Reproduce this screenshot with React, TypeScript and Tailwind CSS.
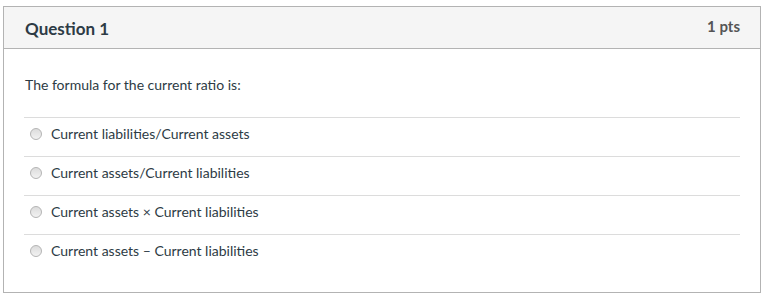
const options = [
  "Current liabilities/Current assets",
  "Current assets/Current liabilities",
  "Current assets × Current liabilities",
  "Current assets – Current liabilities",
];

function Radio() {
  return (
    <span className="block w-[12px] h-[12px] rounded-full border border-[#b4b4b4] bg-gradient-to-b from-[#dcdcdc] to-[#f2f2f2] shrink-0" />
  );
}

export default function App() {
  return (
    <div className="pl-[3px] pt-[6px] bg-white font-['Lato','Liberation_Sans',sans-serif] text-[#2d3b45]">
      <div className="w-[758px] border border-[#b3b3b3] bg-white">
        <div className="h-[42px] flex items-center justify-between pl-[21px] pr-[20px] bg-[#f5f5f5] border-b border-[#b3b3b3]">
          <h2 className="text-[17px] font-bold leading-none mt-[1px]">Question 1</h2>
          <span className="text-[15px] font-bold text-[#555] leading-none -mt-[3px]">1 pts</span>
        </div>
        <div className="pl-[20px] pr-[20px] pt-[26px] pb-[19px]">
          <p className="text-[14px] leading-[20px] mb-[22px] pl-[1px]">The formula for the current ratio is:</p>
          {options.map((o) => (
            <div
              key={o}
              className="flex items-center border-t border-[#dcdcdc] pt-[6px] pb-[12px] pl-[6px] gap-[9px]"
            >
              <Radio />
              <span className="text-[14px] leading-[20px]">{o}</span>
            </div>
          ))}
        </div>
      </div>
    </div>
  );
}
